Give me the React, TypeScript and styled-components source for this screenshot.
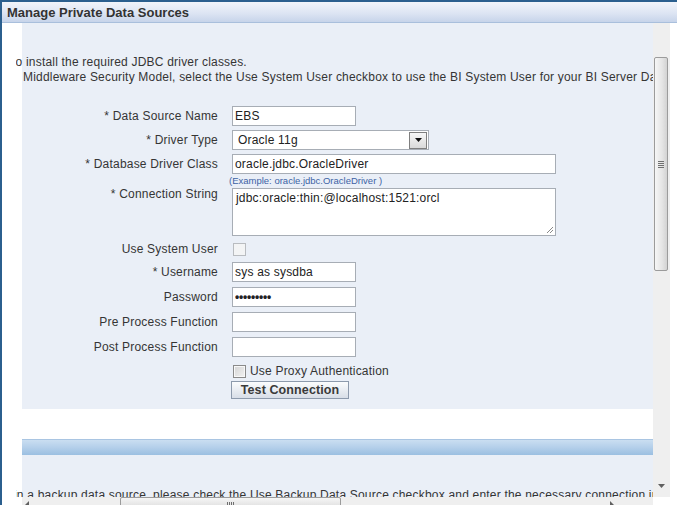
import React from "react";
import styled, { createGlobalStyle } from "styled-components";

const GlobalStyle = createGlobalStyle`
  html, body {
    margin: 0;
    padding: 0;
    background: #ffffff;
    overflow: hidden;
  }
  body {
    font-family: "Liberation Sans", Arial, sans-serif;
    font-size: 12px;
    letter-spacing: 0.2px;
    color: #333333;
  }
`;

const colors = {
  frame: "#2b5f8e",
  panel: "#eaeff7",
  text: "#353535",
  fieldBorder: "#a7adb5",
  track: "#efefef",
};

const Window = styled.div`
  width: 677px;
  height: 505px;
  box-sizing: border-box;
  border-top: 2px solid ${colors.frame};
  border-left: 2px solid ${colors.frame};
  display: flex;
  flex-direction: column;
  overflow: hidden;
`;

const TitleBar = styled.div`
  height: 20px;
  flex: none;
  display: flex;
  align-items: center;
  padding-left: 5px;
  background: linear-gradient(to bottom, #f1f4fa 0%, #dde5f3 55%, #c7d4ea 100%);
  border-bottom: 1px solid #a9bfdc;
  font-weight: bold;
  font-size: 13px;
  letter-spacing: 0;
  color: #333333;
`;

const Body = styled.div`
  flex: 1;
  display: flex;
  min-height: 0;
`;

const MainColumn = styled.div`
  width: 651px;
  flex: none;
  display: flex;
  flex-direction: column;
`;

const ScrollArea = styled.div`
  height: 474px;
  flex: none;
  padding-left: 14px;
  background: #ffffff;
  display: flex;
`;

const Clip = styled.div`
  flex: 1;
  overflow: hidden;
`;

const Content = styled.div`
  width: 900px;
  margin-left: 6px;
`;

const Panel = styled.div<{ $pt: number; $pb: number }>`
  background: ${colors.panel};
  padding-top: ${(p) => p.$pt}px;
  padding-bottom: ${(p) => p.$pb}px;
`;

const IntroText = styled.div`
  margin-left: -8px;
  line-height: 15px;
  white-space: nowrap;
  color: ${colors.text};
`;

const IntroLine = styled.div<{ $shift: number }>`
  margin-left: ${(p) => p.$shift}px;
`;

const Form = styled.div`
  margin-top: 21px;
`;

const Row = styled.div<{ $mb: number; $top?: boolean }>`
  display: flex;
  align-items: ${(p) => (p.$top ? "flex-start" : "center")};
  margin-bottom: ${(p) => p.$mb}px;
`;

const Label = styled.div<{ $mt?: number }>`
  width: 196px;
  flex: none;
  padding-right: 14px;
  text-align: right;
  color: ${colors.text};
  margin-top: ${(p) => p.$mt ?? 0}px;
  box-sizing: content-box;
`;

const TextField = styled.input<{ $w: number }>`
  width: ${(p) => p.$w}px;
  height: 20px;
  box-sizing: border-box;
  border: 1px solid ${colors.fieldBorder};
  background: #ffffff;
  padding: 0 2px;
  margin: 0;
  font-family: "Liberation Sans", Arial, sans-serif;
  font-size: 12px;
  letter-spacing: 0.2px;
  color: #222222;
  outline: none;
`;

const Dots = styled(TextField)`
  font-size: 12px;
  font-weight: bold;
  letter-spacing: -0.2px;
  color: #222;
`;

const SelectBox = styled.div`
  width: 197px;
  height: 20px;
  box-sizing: border-box;
  border: 1px solid ${colors.fieldBorder};
  background: #ffffff;
  display: flex;
  align-items: center;
  justify-content: space-between;
  padding-left: 5px;
  color: #222222;
`;

const DropButton = styled.div`
  width: 16px;
  height: 15px;
  margin-right: 1px;
  border: 1px solid #7f7f7f;
  background: linear-gradient(to bottom, #f7f7f7, #d9d9d9);
  display: flex;
  align-items: center;
  justify-content: center;
`;

const Hint = styled.div`
  margin-left: 207px;
  height: 14px;
  line-height: 14px;
  font-size: 9.5px;
  letter-spacing: 0;
  color: #3d63a5;
`;

const AreaWrap = styled.div`
  position: relative;
  width: 324px;
  height: 48px;
  box-sizing: border-box;
  border: 1px solid ${colors.fieldBorder};
  background: #ffffff;
  padding: 2px 3px;
  color: #222222;
  line-height: 14px;
`;

const Grip = styled.svg`
  position: absolute;
  right: 1px;
  bottom: 1px;
`;

const CheckBox = styled.div<{ $disabled?: boolean }>`
  width: 13px;
  height: 13px;
  box-sizing: border-box;
  margin-left: 1px;
  border: 1px solid ${(p) => (p.$disabled ? "#b9bcc0" : "#8a8a8a")};
  background: ${(p) =>
    p.$disabled
      ? "#f3f4f5"
      : "linear-gradient(135deg, #d4d4d4 0%, #f2f2f2 100%)"};
  box-shadow: ${(p) => (p.$disabled ? "none" : "inset 0 0 0 1px #f8f8f8")};
`;

const CheckRow = styled.div`
  display: flex;
  align-items: center;
  gap: 4px;
  height: 16px;
  color: ${colors.text};
`;

const Button = styled.button`
  width: 118px;
  height: 18px;
  margin: 0 0 0 -1px;
  padding: 0;
  border: 1px solid #8d9aac;
  background: linear-gradient(to bottom, #fbfcfd 0%, #e6eaf0 60%, #d8dee7 100%);
  font-family: "Liberation Sans", Arial, sans-serif;
  font-weight: bold;
  font-size: 12.5px;
  letter-spacing: 0.1px;
  color: #3a3a3a;
`;

const Gap = styled.div<{ $h: number }>`
  height: ${(p) => p.$h}px;
  background: #ffffff;
`;

const SectionHeader = styled.div`
  height: 15px;
  border-top: 1px solid #a9c5e2;
  background: linear-gradient(to bottom, #cadef1 0%, #b4cfea 50%, #9bbfe1 100%);
`;

const BottomText = styled.div`
  margin-left: -8px;
  padding-top: 33px;
  white-space: nowrap;
  line-height: 15px;
  color: ${colors.text};
`;

const VScroll = styled.div`
  width: 17px;
  height: 474px;
  flex: none;
  background: ${colors.track};
  position: relative;
`;

const VThumb = styled.div`
  position: absolute;
  left: 1px;
  top: 34px;
  width: 14px;
  height: 214px;
  box-sizing: border-box;
  border: 1px solid #9b9b9b;
  border-radius: 2px;
  background: linear-gradient(to right, #f6f6f6 0%, #e4e4e4 60%, #d2d2d2 100%);
  display: flex;
  align-items: center;
  justify-content: center;
`;

const GripLines = styled.div<{ $vertical?: boolean }>`
  display: flex;
  flex-direction: ${(p) => (p.$vertical ? "row" : "column")};
  gap: 1px;
  & > span {
    display: block;
    background: #6f6f6f;
    width: ${(p) => (p.$vertical ? "1px" : "6px")};
    height: ${(p) => (p.$vertical ? "6px" : "1px")};
  }
`;

const ArrowDown = styled.svg`
  position: absolute;
  left: 5px;
  bottom: 9px;
`;

const HScroll = styled.div`
  height: 17px;
  margin-left: 20px;
  background: ${colors.track};
  position: relative;
`;

const HThumb = styled.div`
  position: absolute;
  left: 98px;
  top: 0;
  width: 221px;
  height: 14px;
  box-sizing: border-box;
  border: 1px solid #9b9b9b;
  border-radius: 2px;
  background: linear-gradient(to bottom, #f6f6f6 0%, #e4e4e4 60%, #d2d2d2 100%);
  display: flex;
  justify-content: center;
  padding-top: 4px;
`;

const HArrow = styled.svg<{ $side: "left" | "right" }>`
  position: absolute;
  top: 4px;
  ${(p) => (p.$side === "left" ? "left: 2px;" : "right: 38px;")}
`;

const RightGap = styled.div`
  flex: 1;
  background: #ffffff;
`;

function Grips({ vertical }: { vertical?: boolean }) {
  return (
    <GripLines $vertical={vertical}>
      <span />
      <span />
      <span />
      <span />
    </GripLines>
  );
}

export default function App() {
  return (
    <>
      <GlobalStyle />
      <Window>
        <TitleBar>Manage Private Data Sources</TitleBar>
        <Body>
          <MainColumn>
            <ScrollArea>
              <Clip>
                <Content>
                  <Panel $pt={32} $pb={10}>
                    <IntroText>
                      <IntroLine $shift={-2}>to install the required JDBC driver classes.</IntroLine>
                      <IntroLine $shift={9}>
                        Middleware Security Model, select the Use System User checkbox to use the BI
                        System User for your BI Server Data Sources.
                      </IntroLine>
                    </IntroText>
                    <Form>
                      <Row $mb={4}>
                        <Label>* Data Source Name</Label>
                        <TextField $w={124} value="EBS" readOnly />
                      </Row>
                      <Row $mb={4}>
                        <Label>* Driver Type</Label>
                        <SelectBox>
                          Oracle 11g
                          <DropButton>
                            <svg width="7" height="4" viewBox="0 0 7 4">
                              <path d="M0 0H7L3.5 4Z" fill="#111" />
                            </svg>
                          </DropButton>
                        </SelectBox>
                      </Row>
                      <Row $mb={0}>
                        <Label>* Database Driver Class</Label>
                        <TextField $w={324} value="oracle.jdbc.OracleDriver" readOnly />
                      </Row>
                      <Hint>(Example: oracle.jdbc.OracleDriver )</Hint>
                      <Row $mb={5} $top>
                        <Label $mt={-1}>* Connection String</Label>
                        <AreaWrap>
                          jdbc:oracle:thin:@localhost:1521:orcl
                          <Grip width="8" height="8" viewBox="0 0 8 8">
                            <path d="M7 1L1 7M7 4L4 7" stroke="#8a8a8a" strokeWidth="1" />
                          </Grip>
                        </AreaWrap>
                      </Row>
                      <Row $mb={5}>
                        <Label>Use System User</Label>
                        <CheckRow>
                          <CheckBox $disabled />
                        </CheckRow>
                      </Row>
                      <Row $mb={5}>
                        <Label>* Username</Label>
                        <TextField $w={124} value="sys as sysdba" readOnly />
                      </Row>
                      <Row $mb={5}>
                        <Label>Password</Label>
                        <Dots $w={124} value="•••••••••" readOnly />
                      </Row>
                      <Row $mb={5}>
                        <Label>Pre Process Function</Label>
                        <TextField $w={124} value="" readOnly />
                      </Row>
                      <Row $mb={6}>
                        <Label>Post Process Function</Label>
                        <TextField $w={124} value="" readOnly />
                      </Row>
                      <Row $mb={2}>
                        <Label />
                        <CheckRow>
                          <CheckBox />
                          Use Proxy Authentication
                        </CheckRow>
                      </Row>
                      <Row $mb={0}>
                        <Label />
                        <Button>Test Connection</Button>
                      </Row>
                    </Form>
                  </Panel>
                  <Gap $h={30} />
                  <SectionHeader />
                  <Panel $pt={0} $pb={20}>
                    <BottomText>
                      in a backup data source, please check the Use Backup Data Source checkbox and
                      enter the necessary connection information.
                    </BottomText>
                  </Panel>
                </Content>
              </Clip>
            </ScrollArea>
            <HScroll>
              <HArrow $side="left" width="6" height="8" viewBox="0 0 6 8">
                <path d="M5 0L1 4L5 8Z" fill="#606060" />
              </HArrow>
              <HThumb>
                <Grips vertical />
              </HThumb>
              <HArrow $side="right" width="6" height="8" viewBox="0 0 6 8">
                <path d="M1 0L5 4L1 8Z" fill="#606060" />
              </HArrow>
            </HScroll>
          </MainColumn>
          <VScroll>
            <VThumb>
              <Grips />
            </VThumb>
            <ArrowDown width="7" height="4" viewBox="0 0 7 4">
              <path d="M0 0H7L3.5 4Z" fill="#606060" />
            </ArrowDown>
          </VScroll>
          <RightGap />
        </Body>
      </Window>
    </>
  );
}
